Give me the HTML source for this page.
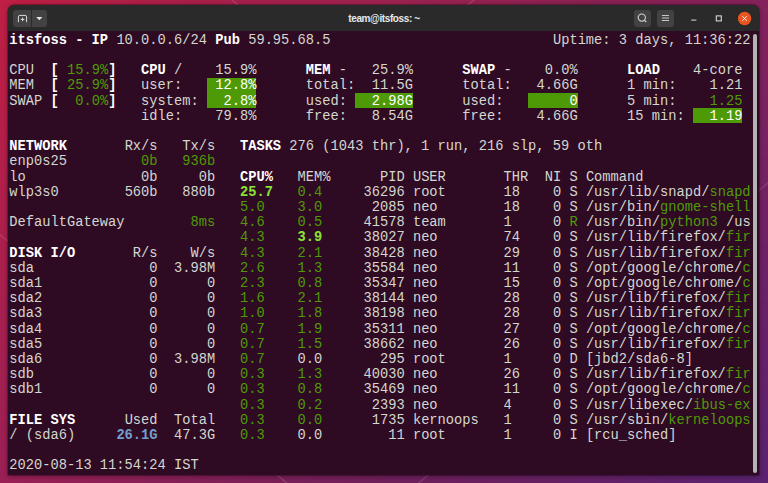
<!DOCTYPE html>
<html><head><meta charset="utf-8"><style>
html,body{margin:0;padding:0;}
body{width:768px;height:483px;overflow:hidden;position:relative;
background:linear-gradient(90deg,#c01f44 0%,#a8204a 25%,#9e2350 50%,#8a2252 76%,#85225c 100%);}
#bl{position:absolute;left:0;top:0;width:768px;height:483px;
background:linear-gradient(90deg,#9a2055 0%,#6e1f5a 50%,#5a2270 100%);
-webkit-mask-image:linear-gradient(180deg,rgba(0,0,0,0) 0%,#000 100%);mask-image:linear-gradient(180deg,rgba(0,0,0,0) 0%,#000 100%);}
#win{position:absolute;left:8px;top:5px;width:751px;height:470px;border-radius:6px 6px 0 0;overflow:hidden;
box-shadow:0 0 0 0.5px rgba(0,0,0,0.45),0 1px 5px rgba(0,0,0,0.4);background:#2a2a2a;}
#hb{position:absolute;left:0;top:0;width:751px;height:26px;background:#2a2a2a;}
#term{position:absolute;left:0;top:26px;width:751px;height:444px;background:#2f0a23;}
#txt span{position:absolute;white-space:pre;font-family:"Liberation Mono",monospace;font-size:13.73px;line-height:15.2px;height:15.2px;color:#d3d7cf;}
#txt .b{color:#ffffff;font-weight:bold;}
#txt .g{color:#4e9a06;}
#txt .G{color:#8ae234;font-weight:bold;}
#txt .u{color:#729fcf;font-weight:bold;}
#txt .B{color:#ffffff;}
#txt .bar{position:absolute;height:15.2px;background:#4e9a06;}
.btn{position:absolute;background:#424242;border-radius:3px;}
#title{position:absolute;left:0;width:768px;top:12.7px;text-align:center;font-family:"Liberation Sans",sans-serif;font-weight:bold;font-size:10px;letter-spacing:-0.4px;color:#e8e8e8;}
#sb{position:absolute;left:753px;top:33.5px;width:4px;height:439px;border-radius:2px;background:#b4b4b4;}
</style></head><body>
<div id="bl"></div>
<svg style="position:absolute;left:0;top:0" width="768" height="483"><g stroke="#ffffff" stroke-opacity="0.13" stroke-width="1.4" fill="none">
<path d="M226 -5 L250 15"/><path d="M480 -5 L456 15"/><path d="M-5 231.1 L12 244.3"/><path d="M752 196.5 L775 177"/>
<path d="M270 469 L295 490"/><path d="M434 469.7 L412 489"/></g></svg>
<div id="win"><div id="hb"></div><div id="term"></div></div>
<div class="btn" style="left:13px;top:9.5px;width:18px;height:17.5px;border-radius:3px 0 0 3px"></div>
<div class="btn" style="left:31.7px;top:9.5px;width:15.5px;height:17.5px;border-radius:0 3px 3px 0"></div>
<svg style="position:absolute;left:0;top:0" width="768" height="32">
<path d="M18.4 22.2 V16.9 Q18.4 15.4 19.9 15.4 H25.1 Q26.6 15.4 26.6 16.9 V22.2" fill="none" stroke="#dcdcdc" stroke-width="1"/>
<path d="M22.6 17.6 V21.2 M20.8 19.4 H24.4" stroke="#e0e0e0" stroke-width="1"/>
<path d="M36.2 17 L42.4 17 L39.3 20.3 Z" fill="#e8e8e8"/>
</svg>
<div class="btn" style="left:634px;top:9.7px;width:17px;height:17px"></div>
<div class="btn" style="left:657px;top:9.7px;width:16.8px;height:17px"></div>
<svg style="position:absolute;left:0;top:0" width="768" height="32">
<circle cx="641.8" cy="17.6" r="3.6" fill="none" stroke="#d6d6d6" stroke-width="1.1"/>
<path d="M644.4 20.2 L646.3 22.1" stroke="#d6d6d6" stroke-width="1.2"/>
<path d="M661.9 15.5 H669 M661.9 18 H669 M661.9 20.5 H669" stroke="#d6d6d6" stroke-width="0.9"/>
<path d="M691.2 20.1 H696.4" stroke="#bdbdbd" stroke-width="1.2"/>
<rect x="716.3" y="15.9" width="5" height="5" fill="none" stroke="#d6d6d6" stroke-width="1.1"/>
<circle cx="744.6" cy="18.5" r="6.7" fill="#e95420"/>
<path d="M742.4 16.3 L746.8 20.7 M746.8 16.3 L742.4 20.7" stroke="#ffffff" stroke-width="1"/>
</svg>
<div id="title">team@itsfoss: ~</div>
<div id="sb"></div>
<div id="txt">
<span class="b" style="left:9.31px;top:32.70px">itsfoss - IP</span>
<span class="n" style="left:116.39px;top:32.70px">10.0.0.6/24</span>
<span class="b" style="left:215.24px;top:32.70px">Pub</span>
<span class="n" style="left:248.18px;top:32.70px">59.95.68.5</span>
<span class="n" style="left:552.95px;top:32.70px">Uptime: 3 days, 11:36:22</span>
<span class="n" style="left:9.31px;top:63.10px">CPU</span>
<span class="b" style="left:50.50px;top:63.10px">[</span>
<span class="g" style="left:58.73px;top:63.10px"> 15.9%</span>
<span class="b" style="left:108.15px;top:63.10px">]</span>
<span class="b" style="left:141.10px;top:63.10px">CPU</span>
<span class="n" style="left:165.81px;top:63.10px"> /</span>
<span class="n" style="left:215.24px;top:63.10px">15.9%</span>
<span class="b" style="left:305.84px;top:63.10px">MEM</span>
<span class="n" style="left:330.55px;top:63.10px"> -</span>
<span class="n" style="left:371.74px;top:63.10px">25.9%</span>
<span class="b" style="left:462.35px;top:63.10px">SWAP</span>
<span class="n" style="left:495.29px;top:63.10px"> -</span>
<span class="n" style="left:544.71px;top:63.10px">0.0%</span>
<span class="b" style="left:627.08px;top:63.10px">LOAD</span>
<span class="n" style="left:692.98px;top:63.10px">4-core</span>
<span class="n" style="left:9.31px;top:78.30px">MEM</span>
<span class="b" style="left:50.50px;top:78.30px">[</span>
<span class="g" style="left:58.73px;top:78.30px"> 25.9%</span>
<span class="b" style="left:108.15px;top:78.30px">]</span>
<span class="n" style="left:141.10px;top:78.30px">user:</span>
<div class="bar" style="left:207.00px;top:77.80px;width:49.42px"></div>
<span class="B" style="left:207.00px;top:78.30px"> 12.8%</span>
<span class="n" style="left:305.84px;top:78.30px">total:</span>
<span class="n" style="left:371.74px;top:78.30px">11.5G</span>
<span class="n" style="left:462.35px;top:78.30px">total:</span>
<span class="n" style="left:536.48px;top:78.30px">4.66G</span>
<span class="n" style="left:627.08px;top:78.30px">1 min:</span>
<span class="n" style="left:709.45px;top:78.30px">1.21</span>
<span class="n" style="left:9.31px;top:93.50px">SWAP</span>
<span class="b" style="left:50.50px;top:93.50px">[</span>
<span class="g" style="left:58.73px;top:93.50px">  0.0%</span>
<span class="b" style="left:108.15px;top:93.50px">]</span>
<span class="n" style="left:141.10px;top:93.50px">system:</span>
<div class="bar" style="left:207.00px;top:93.00px;width:49.42px"></div>
<span class="B" style="left:207.00px;top:93.50px">  2.8%</span>
<span class="n" style="left:305.84px;top:93.50px">used:</span>
<div class="bar" style="left:355.26px;top:93.00px;width:57.66px"></div>
<span class="B" style="left:355.26px;top:93.50px">  2.98G</span>
<span class="n" style="left:462.35px;top:93.50px">used:</span>
<div class="bar" style="left:528.24px;top:93.00px;width:49.42px"></div>
<span class="B" style="left:528.24px;top:93.50px">     0</span>
<span class="n" style="left:627.08px;top:93.50px">5 min:</span>
<span class="g" style="left:709.45px;top:93.50px">1.25</span>
<span class="n" style="left:141.10px;top:108.70px">idle:</span>
<span class="n" style="left:215.24px;top:108.70px">79.8%</span>
<span class="n" style="left:305.84px;top:108.70px">free:</span>
<span class="n" style="left:371.74px;top:108.70px">8.54G</span>
<span class="n" style="left:462.35px;top:108.70px">free:</span>
<span class="n" style="left:536.48px;top:108.70px">4.66G</span>
<span class="n" style="left:627.08px;top:108.70px">15 min:</span>
<div class="bar" style="left:692.98px;top:108.20px;width:49.42px"></div>
<span class="B" style="left:692.98px;top:108.70px">  1.19</span>
<span class="b" style="left:9.31px;top:139.10px">NETWORK</span>
<span class="n" style="left:124.63px;top:139.10px">Rx/s</span>
<span class="n" style="left:182.29px;top:139.10px">Tx/s</span>
<span class="b" style="left:239.95px;top:139.10px">TASKS</span>
<span class="n" style="left:281.13px;top:139.10px"> 276 (1043 thr), 1 run, 216 slp, 59 oth</span>
<span class="n" style="left:9.31px;top:154.30px">enp0s25</span>
<span class="g" style="left:141.10px;top:154.30px">0b</span>
<span class="g" style="left:182.29px;top:154.30px">936b</span>
<span class="n" style="left:9.31px;top:169.50px">lo</span>
<span class="n" style="left:141.10px;top:169.50px">0b</span>
<span class="n" style="left:198.76px;top:169.50px">0b</span>
<span class="b" style="left:239.95px;top:169.50px">CPU%</span>
<span class="n" style="left:297.61px;top:169.50px">MEM%</span>
<span class="n" style="left:379.98px;top:169.50px">PID</span>
<span class="n" style="left:412.92px;top:169.50px">USER</span>
<span class="n" style="left:503.53px;top:169.50px">THR</span>
<span class="n" style="left:544.71px;top:169.50px">NI</span>
<span class="n" style="left:569.43px;top:169.50px">S</span>
<span class="n" style="left:585.90px;top:169.50px">Command</span>
<span class="n" style="left:9.31px;top:184.70px">wlp3s0</span>
<span class="n" style="left:124.63px;top:184.70px">560b</span>
<span class="n" style="left:182.29px;top:184.70px">880b</span>
<span class="G" style="left:239.95px;top:184.70px">25.7</span>
<span class="g" style="left:297.61px;top:184.70px">0.4</span>
<span class="n" style="left:363.50px;top:184.70px">36296</span>
<span class="n" style="left:412.92px;top:184.70px">root</span>
<span class="n" style="left:503.53px;top:184.70px">18</span>
<span class="n" style="left:552.95px;top:184.70px">0</span>
<span class="n" style="left:569.43px;top:184.70px">S</span>
<span class="n" style="left:585.90px;top:184.70px">/usr/lib/snapd/</span>
<span class="g" style="left:709.45px;top:184.70px">snapd</span>
<span class="g" style="left:239.95px;top:199.90px">5.0</span>
<span class="g" style="left:297.61px;top:199.90px">3.0</span>
<span class="n" style="left:371.74px;top:199.90px">2085</span>
<span class="n" style="left:412.92px;top:199.90px">neo</span>
<span class="n" style="left:503.53px;top:199.90px">18</span>
<span class="n" style="left:552.95px;top:199.90px">0</span>
<span class="n" style="left:569.43px;top:199.90px">S</span>
<span class="n" style="left:585.90px;top:199.90px">/usr/bin/</span>
<span class="g" style="left:660.03px;top:199.90px">gnome-shell</span>
<span class="n" style="left:9.31px;top:215.10px">DefaultGateway</span>
<span class="g" style="left:190.52px;top:215.10px">8ms</span>
<span class="g" style="left:239.95px;top:215.10px">4.6</span>
<span class="g" style="left:297.61px;top:215.10px">0.5</span>
<span class="n" style="left:363.50px;top:215.10px">41578</span>
<span class="n" style="left:412.92px;top:215.10px">team</span>
<span class="n" style="left:503.53px;top:215.10px">1</span>
<span class="n" style="left:552.95px;top:215.10px">0</span>
<span class="g" style="left:569.43px;top:215.10px">R</span>
<span class="n" style="left:585.90px;top:215.10px">/usr/bin/</span>
<span class="g" style="left:660.03px;top:215.10px">python3</span>
<span class="n" style="left:717.69px;top:215.10px"> /us</span>
<span class="g" style="left:239.95px;top:230.30px">4.3</span>
<span class="G" style="left:297.61px;top:230.30px">3.9</span>
<span class="n" style="left:363.50px;top:230.30px">38027</span>
<span class="n" style="left:412.92px;top:230.30px">neo</span>
<span class="n" style="left:503.53px;top:230.30px">74</span>
<span class="n" style="left:552.95px;top:230.30px">0</span>
<span class="n" style="left:569.43px;top:230.30px">S</span>
<span class="n" style="left:585.90px;top:230.30px">/usr/lib/firefox/</span>
<span class="g" style="left:725.93px;top:230.30px">fir</span>
<span class="b" style="left:9.31px;top:245.50px">DISK I/O</span>
<span class="n" style="left:132.87px;top:245.50px">R/s</span>
<span class="n" style="left:190.52px;top:245.50px">W/s</span>
<span class="g" style="left:239.95px;top:245.50px">4.3</span>
<span class="g" style="left:297.61px;top:245.50px">2.1</span>
<span class="n" style="left:363.50px;top:245.50px">38428</span>
<span class="n" style="left:412.92px;top:245.50px">neo</span>
<span class="n" style="left:503.53px;top:245.50px">29</span>
<span class="n" style="left:552.95px;top:245.50px">0</span>
<span class="n" style="left:569.43px;top:245.50px">S</span>
<span class="n" style="left:585.90px;top:245.50px">/usr/lib/firefox/</span>
<span class="g" style="left:725.93px;top:245.50px">fir</span>
<span class="n" style="left:9.31px;top:260.70px">sda</span>
<span class="n" style="left:149.34px;top:260.70px">0</span>
<span class="n" style="left:174.05px;top:260.70px">3.98M</span>
<span class="g" style="left:239.95px;top:260.70px">2.6</span>
<span class="g" style="left:297.61px;top:260.70px">1.3</span>
<span class="n" style="left:363.50px;top:260.70px">35584</span>
<span class="n" style="left:412.92px;top:260.70px">neo</span>
<span class="n" style="left:503.53px;top:260.70px">11</span>
<span class="n" style="left:552.95px;top:260.70px">0</span>
<span class="n" style="left:569.43px;top:260.70px">S</span>
<span class="n" style="left:585.90px;top:260.70px">/opt/google/chrome/</span>
<span class="g" style="left:742.40px;top:260.70px">c</span>
<span class="n" style="left:9.31px;top:275.90px">sda1</span>
<span class="n" style="left:149.34px;top:275.90px">0</span>
<span class="n" style="left:207.00px;top:275.90px">0</span>
<span class="g" style="left:239.95px;top:275.90px">2.3</span>
<span class="g" style="left:297.61px;top:275.90px">0.8</span>
<span class="n" style="left:363.50px;top:275.90px">35347</span>
<span class="n" style="left:412.92px;top:275.90px">neo</span>
<span class="n" style="left:503.53px;top:275.90px">15</span>
<span class="n" style="left:552.95px;top:275.90px">0</span>
<span class="n" style="left:569.43px;top:275.90px">S</span>
<span class="n" style="left:585.90px;top:275.90px">/opt/google/chrome/</span>
<span class="g" style="left:742.40px;top:275.90px">c</span>
<span class="n" style="left:9.31px;top:291.10px">sda2</span>
<span class="n" style="left:149.34px;top:291.10px">0</span>
<span class="n" style="left:207.00px;top:291.10px">0</span>
<span class="g" style="left:239.95px;top:291.10px">1.6</span>
<span class="g" style="left:297.61px;top:291.10px">2.1</span>
<span class="n" style="left:363.50px;top:291.10px">38144</span>
<span class="n" style="left:412.92px;top:291.10px">neo</span>
<span class="n" style="left:503.53px;top:291.10px">28</span>
<span class="n" style="left:552.95px;top:291.10px">0</span>
<span class="n" style="left:569.43px;top:291.10px">S</span>
<span class="n" style="left:585.90px;top:291.10px">/usr/lib/firefox/</span>
<span class="g" style="left:725.93px;top:291.10px">fir</span>
<span class="n" style="left:9.31px;top:306.30px">sda3</span>
<span class="n" style="left:149.34px;top:306.30px">0</span>
<span class="n" style="left:207.00px;top:306.30px">0</span>
<span class="g" style="left:239.95px;top:306.30px">1.0</span>
<span class="g" style="left:297.61px;top:306.30px">1.8</span>
<span class="n" style="left:363.50px;top:306.30px">38198</span>
<span class="n" style="left:412.92px;top:306.30px">neo</span>
<span class="n" style="left:503.53px;top:306.30px">28</span>
<span class="n" style="left:552.95px;top:306.30px">0</span>
<span class="n" style="left:569.43px;top:306.30px">S</span>
<span class="n" style="left:585.90px;top:306.30px">/usr/lib/firefox/</span>
<span class="g" style="left:725.93px;top:306.30px">fir</span>
<span class="n" style="left:9.31px;top:321.50px">sda4</span>
<span class="n" style="left:149.34px;top:321.50px">0</span>
<span class="n" style="left:207.00px;top:321.50px">0</span>
<span class="g" style="left:239.95px;top:321.50px">0.7</span>
<span class="g" style="left:297.61px;top:321.50px">1.9</span>
<span class="n" style="left:363.50px;top:321.50px">35311</span>
<span class="n" style="left:412.92px;top:321.50px">neo</span>
<span class="n" style="left:503.53px;top:321.50px">27</span>
<span class="n" style="left:552.95px;top:321.50px">0</span>
<span class="n" style="left:569.43px;top:321.50px">S</span>
<span class="n" style="left:585.90px;top:321.50px">/opt/google/chrome/</span>
<span class="g" style="left:742.40px;top:321.50px">c</span>
<span class="n" style="left:9.31px;top:336.70px">sda5</span>
<span class="n" style="left:149.34px;top:336.70px">0</span>
<span class="n" style="left:207.00px;top:336.70px">0</span>
<span class="g" style="left:239.95px;top:336.70px">0.7</span>
<span class="g" style="left:297.61px;top:336.70px">1.5</span>
<span class="n" style="left:363.50px;top:336.70px">38662</span>
<span class="n" style="left:412.92px;top:336.70px">neo</span>
<span class="n" style="left:503.53px;top:336.70px">26</span>
<span class="n" style="left:552.95px;top:336.70px">0</span>
<span class="n" style="left:569.43px;top:336.70px">S</span>
<span class="n" style="left:585.90px;top:336.70px">/usr/lib/firefox/</span>
<span class="g" style="left:725.93px;top:336.70px">fir</span>
<span class="n" style="left:9.31px;top:351.90px">sda6</span>
<span class="n" style="left:149.34px;top:351.90px">0</span>
<span class="n" style="left:174.05px;top:351.90px">3.98M</span>
<span class="g" style="left:239.95px;top:351.90px">0.7</span>
<span class="n" style="left:297.61px;top:351.90px">0.0</span>
<span class="n" style="left:379.98px;top:351.90px">295</span>
<span class="n" style="left:412.92px;top:351.90px">root</span>
<span class="n" style="left:503.53px;top:351.90px">1</span>
<span class="n" style="left:552.95px;top:351.90px">0</span>
<span class="n" style="left:569.43px;top:351.90px">D</span>
<span class="n" style="left:585.90px;top:351.90px">[jbd2/sda6-8]</span>
<span class="n" style="left:9.31px;top:367.10px">sdb</span>
<span class="n" style="left:149.34px;top:367.10px">0</span>
<span class="n" style="left:207.00px;top:367.10px">0</span>
<span class="g" style="left:239.95px;top:367.10px">0.3</span>
<span class="g" style="left:297.61px;top:367.10px">1.3</span>
<span class="n" style="left:363.50px;top:367.10px">40030</span>
<span class="n" style="left:412.92px;top:367.10px">neo</span>
<span class="n" style="left:503.53px;top:367.10px">26</span>
<span class="n" style="left:552.95px;top:367.10px">0</span>
<span class="n" style="left:569.43px;top:367.10px">S</span>
<span class="n" style="left:585.90px;top:367.10px">/usr/lib/firefox/</span>
<span class="g" style="left:725.93px;top:367.10px">fir</span>
<span class="n" style="left:9.31px;top:382.30px">sdb1</span>
<span class="n" style="left:149.34px;top:382.30px">0</span>
<span class="n" style="left:207.00px;top:382.30px">0</span>
<span class="g" style="left:239.95px;top:382.30px">0.3</span>
<span class="g" style="left:297.61px;top:382.30px">0.8</span>
<span class="n" style="left:363.50px;top:382.30px">35469</span>
<span class="n" style="left:412.92px;top:382.30px">neo</span>
<span class="n" style="left:503.53px;top:382.30px">11</span>
<span class="n" style="left:552.95px;top:382.30px">0</span>
<span class="n" style="left:569.43px;top:382.30px">S</span>
<span class="n" style="left:585.90px;top:382.30px">/opt/google/chrome/</span>
<span class="g" style="left:742.40px;top:382.30px">c</span>
<span class="g" style="left:239.95px;top:397.50px">0.3</span>
<span class="g" style="left:297.61px;top:397.50px">0.2</span>
<span class="n" style="left:371.74px;top:397.50px">2393</span>
<span class="n" style="left:412.92px;top:397.50px">neo</span>
<span class="n" style="left:503.53px;top:397.50px">4</span>
<span class="n" style="left:552.95px;top:397.50px">0</span>
<span class="n" style="left:569.43px;top:397.50px">S</span>
<span class="n" style="left:585.90px;top:397.50px">/usr/libexec/</span>
<span class="g" style="left:692.98px;top:397.50px">ibus-ex</span>
<span class="b" style="left:9.31px;top:412.70px">FILE SYS</span>
<span class="n" style="left:124.63px;top:412.70px">Used</span>
<span class="n" style="left:174.05px;top:412.70px">Total</span>
<span class="g" style="left:239.95px;top:412.70px">0.3</span>
<span class="g" style="left:297.61px;top:412.70px">0.0</span>
<span class="n" style="left:371.74px;top:412.70px">1735</span>
<span class="n" style="left:412.92px;top:412.70px">kernoops</span>
<span class="n" style="left:503.53px;top:412.70px">1</span>
<span class="n" style="left:552.95px;top:412.70px">0</span>
<span class="n" style="left:569.43px;top:412.70px">S</span>
<span class="n" style="left:585.90px;top:412.70px">/usr/sbin/</span>
<span class="g" style="left:668.27px;top:412.70px">kerneloops</span>
<span class="n" style="left:9.31px;top:427.90px">/ (sda6)</span>
<span class="u" style="left:116.39px;top:427.90px">26.1G</span>
<span class="n" style="left:174.05px;top:427.90px">47.3G</span>
<span class="g" style="left:239.95px;top:427.90px">0.3</span>
<span class="n" style="left:297.61px;top:427.90px">0.0</span>
<span class="n" style="left:388.21px;top:427.90px">11</span>
<span class="n" style="left:412.92px;top:427.90px">root</span>
<span class="n" style="left:503.53px;top:427.90px">1</span>
<span class="n" style="left:552.95px;top:427.90px">0</span>
<span class="n" style="left:569.43px;top:427.90px">I</span>
<span class="n" style="left:585.90px;top:427.90px">[rcu_sched]</span>
<span class="n" style="left:9.31px;top:458.30px">2020-08-13 11:54:24 IST</span>
</div>
</body></html>
